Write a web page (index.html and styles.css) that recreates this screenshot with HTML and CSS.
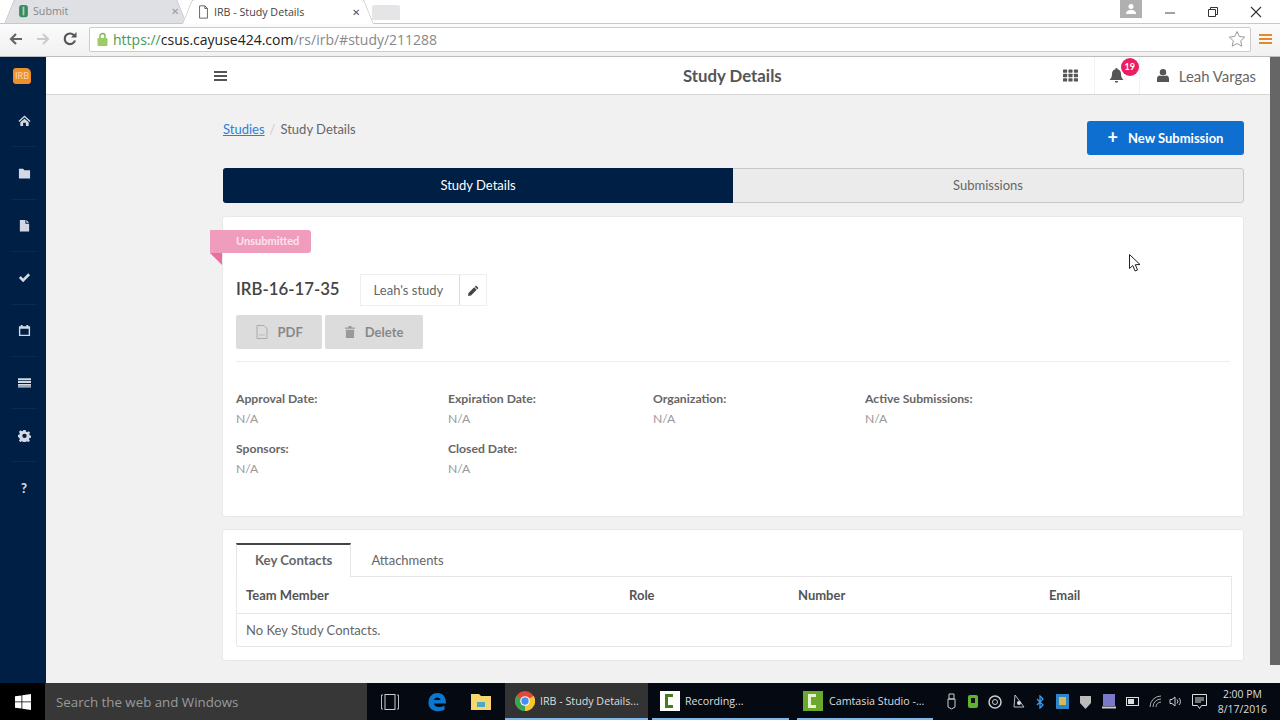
FILE: index.html
```html
<!DOCTYPE html>
<html>
<head>
  <meta charset="utf-8">
  <title>IRB - Study Details</title>
  <link rel="stylesheet" href="styles.css">
</head>
<body>
  <div class="tabbar">
    <div class="tab tab-off">
      <svg class="tab-icon" viewBox="0 0 12 16"><rect x="1" y="1" width="10" height="14" rx="3" fill="#3d8a62"/><path d="M6 3v10" stroke="#a9d3bb" stroke-width="2"/></svg>
      <span class="tab-title">Submit</span>
      <span class="tab-x">✕</span>
    </div>
    <div class="tab tab-on">
      <svg class="tab-icon" viewBox="0 0 12 16"><path d="M1.5 1h6l3 3v11h-9z M7.5 1v3h3" fill="#fff" stroke="#555"/></svg>
      <span class="tab-title">IRB - Study Details</span>
      <span class="tab-x">✕</span>
    </div>
    <div class="tab-new"></div>
    <div class="win-user">
      <svg width="12" height="12" viewBox="0 0 12 12"><circle cx="6" cy="3.5" r="2.5" fill="#fff"/><path d="M1 11c0-3 2-4 5-4s5 1 5 4z" fill="#fff"/></svg>
    </div>
    <div class="win-btns">
      <svg width="12" height="12" viewBox="0 0 12 12"><path d="M1 7h10" stroke="#444"/></svg>
      <svg width="12" height="12" viewBox="0 0 12 12"><path d="M1.5 3.5h7v7h-7z M3.5 3.5v-2h7v7h-2" fill="none" stroke="#333"/></svg>
      <svg width="12" height="12" viewBox="0 0 12 12"><path d="M1 1l10 10M11 1L1 11" stroke="#333" stroke-width="1.1"/></svg>
    </div>
  </div>

  <div class="toolbar">
    <svg class="nav" viewBox="0 0 16 16"><path d="M14 8H3M8 3L3 8l5 5" fill="none" stroke="#666" stroke-width="2.2"/></svg>
    <svg class="nav" viewBox="0 0 16 16"><path d="M2 8h11M8 3l5 5-5 5" fill="none" stroke="#ccc" stroke-width="2.2"/></svg>
    <svg class="nav" viewBox="0 0 16 16"><path d="M13 9.500A5.300 5.300 0 1 1 11.700 4" fill="none" stroke="#555" stroke-width="2.200"/><path d="M9 6.500h5.500V1z" fill="#555"/></svg>
    <div class="omnibox">
      <svg class="lock" width="11" height="14" viewBox="0 0 11 14"><path d="M3 6V4a2.500 2.500 0 0 1 5 0v2" fill="none" stroke="#7cb65a" stroke-width="1.400"/><rect x="0.500" y="6" width="10" height="8" rx="1" fill="#9ccc65"/></svg>
      <span class="url"><span class="url-s">https://</span><span class="url-d">csus.cayuse424.com</span>/rs/irb/#study/211288</span>
      <svg class="star" width="18" height="18" viewBox="0 0 18 18"><path d="M9 1.500l2.300 5 5.400.6-4 3.700 1.100 5.400L9 13.500l-4.800 2.700 1.100-5.400-4-3.700 5.400-.6z" fill="#fff" stroke="#999"/></svg>
    </div>
    <div class="chrome-menu"><i></i><i></i><i></i></div>
  </div>

  <div class="app">
    <nav class="sidebar">
      <div class="logo-cell"><div class="logo">IRB</div></div>
      <div class="side-item"><svg viewBox="0 0 14 14"><path d="M7 1.500L0.500 7.500l1 1L7 3.500l5.500 5 1-1zM2.500 9L7 5l4.500 4v4h-3V9.500h-3V13h-3z"/></svg></div>
      <div class="side-item"><svg viewBox="0 0 14 14"><path d="M1 2h4.500l1.500 1.500h6V12.500H1z"/></svg></div>
      <div class="side-item"><svg viewBox="0 0 14 14"><path d="M2 1h6v4h4v8.500H2zM9 1l3 3H9z"/></svg></div>
      <div class="side-item"><svg viewBox="0 0 14 14"><path d="M1 7.500l2-2 2.500 2.500L11 2.500l2 2-7.500 7.500z"/></svg></div>
      <div class="side-item"><svg viewBox="0 0 14 14"><path d="M3 1h2v1.500h4V1h2v1.500h2V13H1V2.500h2zM2.500 5v6.500h9V5z"/></svg></div>
      <div class="side-item"><svg viewBox="0 0 14 14"><path d="M0 2.500h14v2H0zM0 5.500h14v2H0zM0 8.500h14v2H0zM0 11h14v1.500H0z"/></svg></div>
      <div class="side-item"><svg viewBox="0 0 14 14"><path fill-rule="evenodd" d="M5.800 1h2.400l.4 1.800 1.300.6 1.600-1 1.500 1.600-1 1.500.6 1.300 1.400.4v2.200l-1.700.4-.5 1.300 1 1.500-1.600 1.500-1.500-1-1.300.5-.4 1.700H5.800l-.4-1.700-1.300-.5-1.500 1-1.600-1.500 1-1.500-.5-1.300L0 8.600V6.400l1.500-.4.500-1.300-1-1.500L2.600 1.400l1.500 1 1.300-.6zM7 5a2.400 2.400 0 1 0 0 4.800A2.400 2.400 0 0 0 7 5z"/></svg></div>
      <div class="side-item side-q">?</div>
    </nav>

    <div class="main">
      <header class="topbar">
        <div class="burger"><i></i><i></i><i></i></div>
        <h1 class="page-title">Study Details</h1>
        <div class="top-tools">
          <div class="tool tool-grid">
            <svg width="15" height="13" viewBox="0 0 16 13" fill="#555"><rect width="4.400" height="3.600" rx=".5"/><rect x="5.800" width="4.400" height="3.600" rx=".5"/><rect x="11.600" width="4.400" height="3.600" rx=".5"/><rect y="4.700" width="4.400" height="3.600" rx=".5"/><rect x="5.800" y="4.700" width="4.400" height="3.600" rx=".5"/><rect x="11.600" y="4.700" width="4.400" height="3.600" rx=".5"/><rect y="9.400" width="4.400" height="3.600" rx=".5"/><rect x="5.800" y="9.400" width="4.400" height="3.600" rx=".5"/><rect x="11.600" y="9.400" width="4.400" height="3.600" rx=".5"/></svg>
          </div>
          <div class="tool tool-bell">
            <svg width="15" height="15" viewBox="0 0 15 15" fill="#555"><path d="M7.500 0a1 1 0 0 1 1 1.200C11 1.700 12 3.500 12 6c0 3 1 4.500 2.500 6H.5C2 10.500 3 9 3 6c0-2.500 1-4.300 3.500-4.800a1 1 0 0 1 1-1.200zM5.800 13h3.400a1.700 1.700 0 0 1-3.400 0z"/></svg>
            <span class="badge">19</span>
          </div>
          <div class="user">
            <svg width="12" height="13" viewBox="0 0 12 13" fill="#555"><circle cx="6" cy="3.300" r="3.200"/><path d="M0 13V9.500C0 7.500 1.500 6.500 3 6.500c1 .8 5 .8 6 0 1.500 0 3 1 3 3V13z"/></svg>
            <span>Leah Vargas</span>
          </div>
        </div>
      </header>

      <div class="content">
        <div class="crumb-row">
          <div class="crumbs"><a class="crumb-link">Studies</a><span class="crumb-sep">/</span><span>Study Details</span></div>
          <button class="btn-new"><span class="plus">+</span>New Submission</button>
        </div>

        <div class="switcher">
          <div class="switch switch-on">Study Details</div>
          <div class="switch">Submissions</div>
        </div>

        <section class="card card-study">
          <div class="ribbon">Unsubmitted</div>
          <div class="study-head">
            <h2 class="study-id">IRB-16-17-35</h2>
            <div class="study-name">
              <span class="name-text">Leah's study</span>
              <span class="name-edit"><svg width="11" height="11" viewBox="0 0 11 11"><path d="M8 .5l2.500 2.500-1.200 1.200-2.500-2.500zM6.200 2.300l2.500 2.500L3 10.500l-3 .5.500-3z" fill="#444"/></svg></span>
            </div>
          </div>
          <div class="actions">
            <button class="btn-gray">
              <svg width="12" height="14" viewBox="0 0 12 14"><path d="M1 .5h7l3 3v10H1z" fill="none" stroke="#aaa"/><path d="M3 10h6" stroke="#bbb"/></svg>PDF
            </button>
            <button class="btn-gray">
              <svg width="10" height="12" viewBox="0 0 11 13"><path d="M4 0h3l.5 1.500H11V3H0V1.500h3.500zM1 4h9v9H1z" fill="#999"/></svg>Delete
            </button>
          </div>
          <div class="facts">
            <div class="fact"><b>Approval Date:</b><span>N/A</span></div>
            <div class="fact"><b>Expiration Date:</b><span>N/A</span></div>
            <div class="fact"><b>Organization:</b><span>N/A</span></div>
            <div class="fact"><b>Active Submissions:</b><span>N/A</span></div>
            <div class="fact"><b>Sponsors:</b><span>N/A</span></div>
            <div class="fact"><b>Closed Date:</b><span>N/A</span></div>
          </div>
        </section>

        <section class="card card-contacts">
          <div class="subtabs">
            <div class="subtab subtab-on">Key Contacts</div>
            <div class="subtab">Attachments</div>
          </div>
          <div class="contact-table">
            <div class="contact-row contact-head">
              <div class="col-member">Team Member</div>
              <div class="col-role">Role</div>
              <div class="col-number">Number</div>
              <div>Email</div>
            </div>
            <div class="contact-row contact-empty">No Key Study Contacts.</div>
          </div>
        </section>
      </div>
    </div>

    <div class="scrollbar"><div class="scroll-thumb"></div></div>
  </div>

  <footer class="taskbar">
    <div class="start">
      <svg width="16" height="16" viewBox="0 0 16 16" fill="#fff"><path d="M0 2.300l6.500-.9v6.100H0zM7.300 1.300L16 0v7.500H7.300zM0 8.300h6.500v6.200L0 13.700zM7.300 8.300H16V16l-8.700-1.200z"/></svg>
    </div>
    <div class="search">Search the web and Windows</div>
    <div class="pinned">
      <svg width="18" height="16" viewBox="0 0 18 16"><path d="M2 1H.5v14H2M16 1h1.500v14H16" stroke="#bbb" fill="none"/><rect x="4" y=".5" width="10" height="15" fill="none" stroke="#ccc"/></svg>
      <svg class="pin-edge" width="20" height="20" viewBox="0 0 20 20"><path d="M1.500 11C1.500 4 6 1 10.500 1 16 1 19 5 19 11.500H7c.3 4 6 4.500 10.500 2v4.300C11 21 1.500 19 1.500 11zM7 8h6.500C13.300 4.500 7.500 4.500 7 8z" fill="#0a78d0"/></svg>
      <svg width="20" height="17" viewBox="0 0 20 17"><path d="M0 1h8l2 2h10v14H0z" fill="#f5d76e"/><rect x="6" y="9" width="8" height="5" fill="#4aa8c8"/></svg>
    </div>
    <div class="task task-chrome">
      <svg width="20" height="20" viewBox="0 0 20 20"><circle cx="10" cy="10" r="10" fill="#e2483a"/><path d="M10 10L1.300 5A10 10 0 0 0 10 20z" fill="#3aa655"/><path d="M10 10l8.700-5A10 10 0 0 1 10 20z" fill="#f7c52d"/><circle cx="10" cy="10" r="4.800" fill="#fff"/><circle cx="10" cy="10" r="3.700" fill="#4b8df0"/></svg>
      <span>IRB - Study Details...</span>
    </div>
    <div class="task task-rec">
      <div class="camtasia camtasia-w"><i></i></div>
      <span>Recording...</span>
    </div>
    <div class="task task-cam">
      <div class="camtasia camtasia-g"><i></i></div>
      <span>Camtasia Studio -...</span>
    </div>
    <div class="tray">
      <svg width="12" height="17" viewBox="0 0 12 17"><path d="M3 1h5v5H3zM2 6h7v8l-3.500 2L2 14z" fill="none" stroke="#ccc"/></svg>
      <svg width="10" height="14" viewBox="0 0 10 14"><rect width="10" height="13" rx="2" fill="#5cb531"/><rect x="3" y="3" width="4" height="5" fill="#111"/></svg>
      <svg width="14" height="14" viewBox="0 0 14 14"><circle cx="7" cy="7" r="6" fill="none" stroke="#ccc" stroke-width="1.500"/><circle cx="7" cy="7" r="2.500" fill="none" stroke="#ccc"/></svg>
      <svg width="14" height="15" viewBox="0 0 14 15"><path d="M3 1l9 12H2z" fill="none" stroke="#bbb"/><circle cx="7" cy="9" r="2" fill="#ddd"/></svg>
      <svg width="8" height="14" viewBox="0 0 8 14"><path d="M1 4l6 6-3 3V1l3 3-6 6" fill="none" stroke="#3d9cf0" stroke-width="1.300"/></svg>
      <svg class="tray-app" width="13" height="15" viewBox="0 0 13 15"><rect width="13" height="15" fill="#2e86c9"/><rect x="3" y="3" width="7" height="8" fill="#d5b85a"/></svg>
      <svg width="13" height="14" viewBox="0 0 13 14"><path d="M1 1h11v7l-5.500 6L1 8z" fill="#bbb"/></svg>
      <svg width="14" height="16" viewBox="0 0 14 16"><rect x="1" width="12" height="12" fill="#7a78c8"/><path d="M0 13.500h14" stroke="#ccc" stroke-width="2"/></svg>
      <svg width="13" height="9" viewBox="0 0 13 9"><rect x=".5" y=".5" width="12" height="8" fill="none" stroke="#ddd"/><rect x="2" y="2" width="6" height="5" fill="#ddd"/></svg>
      <svg class="tray-wifi" width="14" height="13" viewBox="0 0 14 13"><path d="M1 12A11 11 0 0 1 12 1M4 12a8 8 0 0 1 8-8M7 12a5 5 0 0 1 5-5" fill="none" stroke="#aaa"/></svg>
      <svg width="13" height="13" viewBox="0 0 13 13"><path d="M1 4.500h2L6 2v9L3 8.500H1z" fill="none" stroke="#ccc"/><path d="M8 4.500a3 3 0 0 1 0 4M10 3a5 5 0 0 1 0 7" fill="none" stroke="#ccc"/></svg>
      <svg width="15" height="15" viewBox="0 0 15 15"><path d="M.5.500h14v11h-5l-2 3-2-3h-5z" fill="none" stroke="#ddd"/><path d="M3 4h9M3 6h9M3 8h6" stroke="#ddd"/></svg>
    </div>
    <div class="clock"><span>2:00 PM</span><span>8/17/2016</span></div>
  </footer>

  <svg class="cursor" width="12" height="18" viewBox="0 0 12 18"><path d="M.5.500v14l3.300-3 2.200 5.500 2.500-1-2.200-5.300 4.700-.2z" fill="#fff" stroke="#222"/></svg>
</body>
</html>
```

FILE: styles.css
```css
* {
  box-sizing: border-box;
}

body {
  margin: 0;
  display: flex;
  flex-direction: column;
  height: 720px;
  overflow: hidden;
  font-family: Lato, "Open Sans", sans-serif;
  font-size: 13px;
  color: #555;
  background: #fff;
}

/* browser chrome */
.tabbar {
  display: flex;
  align-items: flex-end;
  height: 24px;
  padding-left: 9px;
  background: #fff;
  font-family: "Open Sans", sans-serif;
  font-size: 10.7px;
  border-bottom: 1px solid #c8c8c8;
}

.tab {
  display: flex;
  align-items: center;
  position: relative;
  isolation: isolate;
  height: 24px;
}

/* slanted tab edges, one half skewed each way */
.tab::before,
.tab::after {
  content: "";
  position: absolute;
  top: 0;
  bottom: 0;
  width: 55%;
  z-index: -1;
  border-top: 1px solid #c8c8c8;
}

.tab::before {
  left: 0;
  border-left: 1px solid #c8c8c8;
  border-radius: 3px 0 0 0;
  transform: skewX(-22deg);
}

.tab::after {
  right: 0;
  border-right: 1px solid #c8c8c8;
  border-radius: 0 3px 0 0;
  transform: skewX(22deg);
}

.tab-off {
  width: 173px;
  margin-right: 5px;
  padding: 0 3px 0 9px;
  color: #888;
}

.tab-off::before,
.tab-off::after {
  background: #dfe0e3;
}

.tab-on {
  width: 182px;
  height: 25px;
  margin-bottom: -1px;
  margin-right: 3px;
  padding: 0 9px 0 11px;
  color: #444;
  z-index: 1;
}

.tab-on::before,
.tab-on::after {
  background: #fff;
}

.tab-icon {
  width: 11px;
  height: 14px;
  margin-right: 4px;
  flex: none;
}

.tab-on .tab-icon {
  margin-right: 5px;
}

.tab-title {
  flex: 1;
}

.tab-x {
  font-size: 10px;
  color: #555;
}

.tab-off .tab-x {
  color: #999;
}

.tab-new {
  width: 28px;
  height: 15px;
  margin-bottom: 3px;
  background: #e5e5e8;
  border-radius: 2px 2px 0 0;
}

.win-user {
  display: flex;
  align-items: center;
  justify-content: center;
  width: 22px;
  height: 18px;
  margin: 0 0 auto auto;
  background: #b0b0b0;
}

.win-btns {
  display: flex;
  gap: 31px;
  align-items: center;
  align-self: center;
  margin: 0 18px 0 22px;
}

.toolbar {
  display: flex;
  align-items: center;
  height: 33px;
  padding: 0 8px 2px;
  background: linear-gradient(#fbfbfb, #f1f1f1);
  border-bottom: 1px solid #bcbcbc;
}

.nav {
  width: 16px;
  height: 16px;
  margin-right: 11px;
  flex: none;
}

.omnibox {
  display: flex;
  align-items: center;
  flex: 1;
  height: 25px;
  padding: 0 4px 0 7px;
  background: #fff;
  border: 1px solid #ccc;
  border-radius: 2px;
}

.lock {
  margin-right: 5px;
  flex: none;
}

.url {
  flex: 1;
  font-family: "Open Sans", sans-serif;
  font-size: 14px;
  color: #888;
}

.url-s {
  color: #3f9b57;
}

.url-d {
  color: #222;
}

.chrome-menu {
  display: flex;
  flex-direction: column;
  gap: 2px;
  width: 13px;
  margin-left: 8px;
}

.chrome-menu i {
  display: block;
  height: 2px;
  background: #e08a2c;
}

/* page */
.app {
  display: flex;
  flex: 1;
  min-height: 0;
  background: #f1f1f1;
}

.sidebar {
  display: flex;
  flex-direction: column;
  width: 46px;
  flex: none;
  background: #001f45;
}

.logo-cell {
  height: 38px;
  display: flex;
  align-items: center;
  padding-left: 13px;
}

.logo {
  width: 18px;
  height: 16px;
  background: #ee8f2e;
  color: #f8d9b2;
  border-radius: 3px 5px 3px 3px;
  font-size: 9px;
  line-height: 16px;
  text-align: center;
}

.side-item {
  display: flex;
  align-items: center;
  justify-content: center;
  width: 26px;
  height: 52.4px;
  margin-left: 11px;
  color: #d3d9e4;
  border-bottom: 1px solid #0a2a50;
}

.side-item svg {
  width: 13px;
  height: 13px;
  fill: #d3d9e4;
}

.side-q {
  font-size: 13px;
  font-weight: 900;
  border-bottom: none;
}

.main {
  flex: 1;
  min-width: 0;
  display: flex;
  flex-direction: column;
}

.topbar {
  display: flex;
  align-items: center;
  height: 38px;
  flex: none;
  background: #fff;
  border-bottom: 1px solid #d5d5d5;
}

.burger {
  display: flex;
  flex-direction: column;
  gap: 2px;
  width: 13px;
  margin-left: 168px;
}

.burger i {
  display: block;
  height: 2px;
  background: #555;
}

.page-title {
  flex: 1;
  margin: 0;
  padding-left: 456px;
  font-size: 16.8px;
  font-weight: 700;
  color: #555;
}

.top-tools {
  display: flex;
  align-items: center;
  height: 100%;
}

.tool {
  display: flex;
  align-items: center;
  justify-content: center;
  height: 100%;
  border-right: 1px solid #f2f2f2;
}

.tool-grid {
  width: 47px;
}

.tool-bell {
  position: relative;
  width: 45px;
}

.badge {
  position: absolute;
  left: 26px;
  top: 1px;
  width: 18px;
  height: 18px;
  border-radius: 50%;
  background: #e91e63;
  color: #fff;
  font-size: 9px;
  font-weight: 700;
  line-height: 17px;
  text-align: center;
}

.user {
  display: flex;
  align-items: center;
  gap: 10px;
  padding: 0 14px 0 17px;
  font-size: 14.9px;
  color: #666;
}

.content {
  flex: 1;
  min-height: 0;
  padding: 0 26px 0 177px;
}

.crumb-row {
  display: flex;
  justify-content: space-between;
  height: 73px;
  padding-top: 26px;
}

.crumbs {
  font-size: 13px;
  color: #666;
}

.crumb-link {
  color: #2f7ed8;
  text-decoration: underline;
}

.crumb-sep {
  margin: 0 5px;
  color: #ccc;
}

.btn-new {
  height: 34px;
  width: 157px;
  background: #0f6fd0;
  color: #fff;
  border: none;
  border-radius: 3px;
  font-family: inherit;
  font-size: 13px;
  font-weight: 700;
}

.plus {
  margin-right: 10px;
  font-size: 18px;
  line-height: 13px;
  vertical-align: -1px;
}

.switcher {
  display: flex;
  height: 35px;
  border: 1px solid #c8c8c8;
  border-radius: 3px;
  background: #ebebeb;
  font-size: 13px;
}

.switch {
  flex: 1;
  display: flex;
  align-items: center;
  justify-content: center;
  padding-bottom: 1px;
  color: #666;
}

.switch-on {
  background: #001f45;
  color: #fff;
  margin: -1px 0 -1px -1px;
  border-radius: 3px 0 0 3px;
}

.card {
  background: #fff;
  border: 1px solid #e8e8e8;
  border-radius: 3px;
  margin-left: -1px;
}

.card-study {
  position: relative;
  height: 301px;
  margin-top: 13px;
  padding: 57px 13px 0;
}

.ribbon {
  position: absolute;
  left: -13px;
  top: 13px;
  width: 101px;
  height: 23px;
  padding-left: 26px;
  background: #f09dbd;
  color: #fce4ed;
  border-radius: 0 3px 3px 0;
  font-size: 11px;
  font-weight: 700;
  line-height: 22px;
}

.ribbon::after {
  content: "";
  position: absolute;
  left: 0;
  top: 23px;
  border-top: 12px solid #ec6d9f;
  border-left: 12px solid transparent;
}

.study-head {
  display: flex;
  align-items: center;
  gap: 20px;
}

.study-id {
  margin: -3px 0 0;
  font-size: 16.8px;
  font-weight: 600;
  color: #444;
}

.study-name {
  display: flex;
  height: 32px;
  align-items: center;
  border: 1px solid #eee;
  font-size: 13px;
  color: #666;
}

.name-text {
  padding: 0 16px 0 13px;
  border-right: 1px solid #ddd;
  line-height: 30px;
}

.name-edit {
  display: flex;
  width: 26px;
  justify-content: center;
}

.actions {
  display: flex;
  gap: 3px;
  margin-top: 9px;
  padding-bottom: 12px;
  border-bottom: 1px solid #eee;
}

.btn-gray {
  display: flex;
  align-items: center;
  justify-content: center;
  gap: 10px;
  height: 34px;
  padding: 0 19.5px;
  background: #dcdcdc;
  color: #888;
  border: none;
  border-radius: 2px;
  font-family: inherit;
  font-size: 13px;
  font-weight: 700;
}

.facts {
  display: grid;
  grid-template-columns: 212px 205px 212px 1fr;
  row-gap: 14px;
  margin-top: 29px;
}

.fact {
  display: flex;
  flex-direction: column;
  gap: 4px;
  font-size: 12.2px;
  line-height: 16px;
  color: #999;
}

.fact b {
  font-weight: 700;
  color: #666;
}

.card-contacts {
  height: 132px;
  margin-top: 12px;
  padding: 13px 11px 0 13px;
}

.subtabs {
  display: flex;
  height: 34px;
  border-bottom: 1px solid #e5e5e5;
  font-size: 13px;
}

.subtab {
  display: flex;
  align-items: center;
  padding: 0 20px;
  color: #666;
}

.subtab-on {
  height: 35px;
  padding: 0 18px 2px;
  font-size: 13.2px;
  font-weight: 700;
  border: 1px solid #e5e5e5;
  border-top: 2px solid #444;
  border-bottom: 1px solid #fff;
  background: #fff;
}

.contact-table {
  border: 1px solid #e8e8e8;
  border-top: none;
  border-radius: 0 0 3px 3px;
}

.contact-row {
  display: flex;
  align-items: center;
  padding-left: 9px;
  font-size: 13px;
}

.contact-head {
  height: 37px;
  font-weight: 700;
  border-bottom: 1px solid #e5e5e5;
  color: #555;
}

.contact-empty {
  height: 32px;
  color: #666;
}

.col-member {
  width: 383px;
}

.col-role {
  width: 169px;
}

.col-number {
  width: 251px;
}

.scrollbar {
  width: 10px;
  flex: none;
  background: #f1f1f1;
}

.scroll-thumb {
  height: 608px;
  background: #666;
}

/* windows taskbar */
.taskbar {
  display: flex;
  align-items: center;
  height: 37px;
  flex: none;
  background: #050a12;
  color: #ddd;
  font-family: "Open Sans", sans-serif;
  font-size: 10.7px;
}

.start {
  display: flex;
  align-items: center;
  justify-content: center;
  width: 45px;
  height: 100%;
  background: #000;
}

.search {
  display: flex;
  align-items: center;
  width: 322px;
  height: 100%;
  padding-left: 11px;
  background: #373737;
  color: #9a9a9a;
  font-size: 13.3px;
}

.pinned {
  display: flex;
  align-items: center;
  gap: 26px;
  width: 138px;
  height: 100%;
  padding-left: 14px;
}

.pin-edge {
  margin: 0 -2px 0 2px;
}

.task {
  display: flex;
  align-items: center;
  flex: none;
  height: 100%;
  white-space: nowrap;
  border-bottom: 2px solid #7fb8e8;
}

.task-chrome {
  width: 143px;
  gap: 5px;
  padding-left: 10px;
  background: #333;
}

.task-rec {
  width: 137px;
  gap: 5px;
  margin-left: 4px;
  padding-left: 8px;
}

.task-cam {
  width: 136px;
  gap: 6px;
  margin-left: 8px;
  padding-left: 6px;
}

.camtasia {
  width: 20px;
  height: 20px;
  padding: 3px 5px;
}

.camtasia i {
  display: block;
  width: 8px;
  height: 14px;
  border-left: 3px solid;
  border-top: 3px solid;
  border-bottom: 3px solid;
}

.camtasia-w {
  background: #fff;
  color: #4a7a20;
}

.camtasia-g {
  background: #6aa82e;
  color: #e6f3d0;
}

.tray {
  display: flex;
  align-items: center;
  gap: 10px;
  margin-left: auto;
  padding-right: 11px;
}

.tray-app {
  margin-left: 2px;
}

.tray-wifi {
  margin-right: -4px;
}

.clock {
  display: flex;
  flex-direction: column;
  align-items: center;
  padding-right: 13px;
  font-size: 10.4px;
  line-height: 15px;
}

.cursor {
  position: absolute;
  left: 1129px;
  top: 254px;
}
```
